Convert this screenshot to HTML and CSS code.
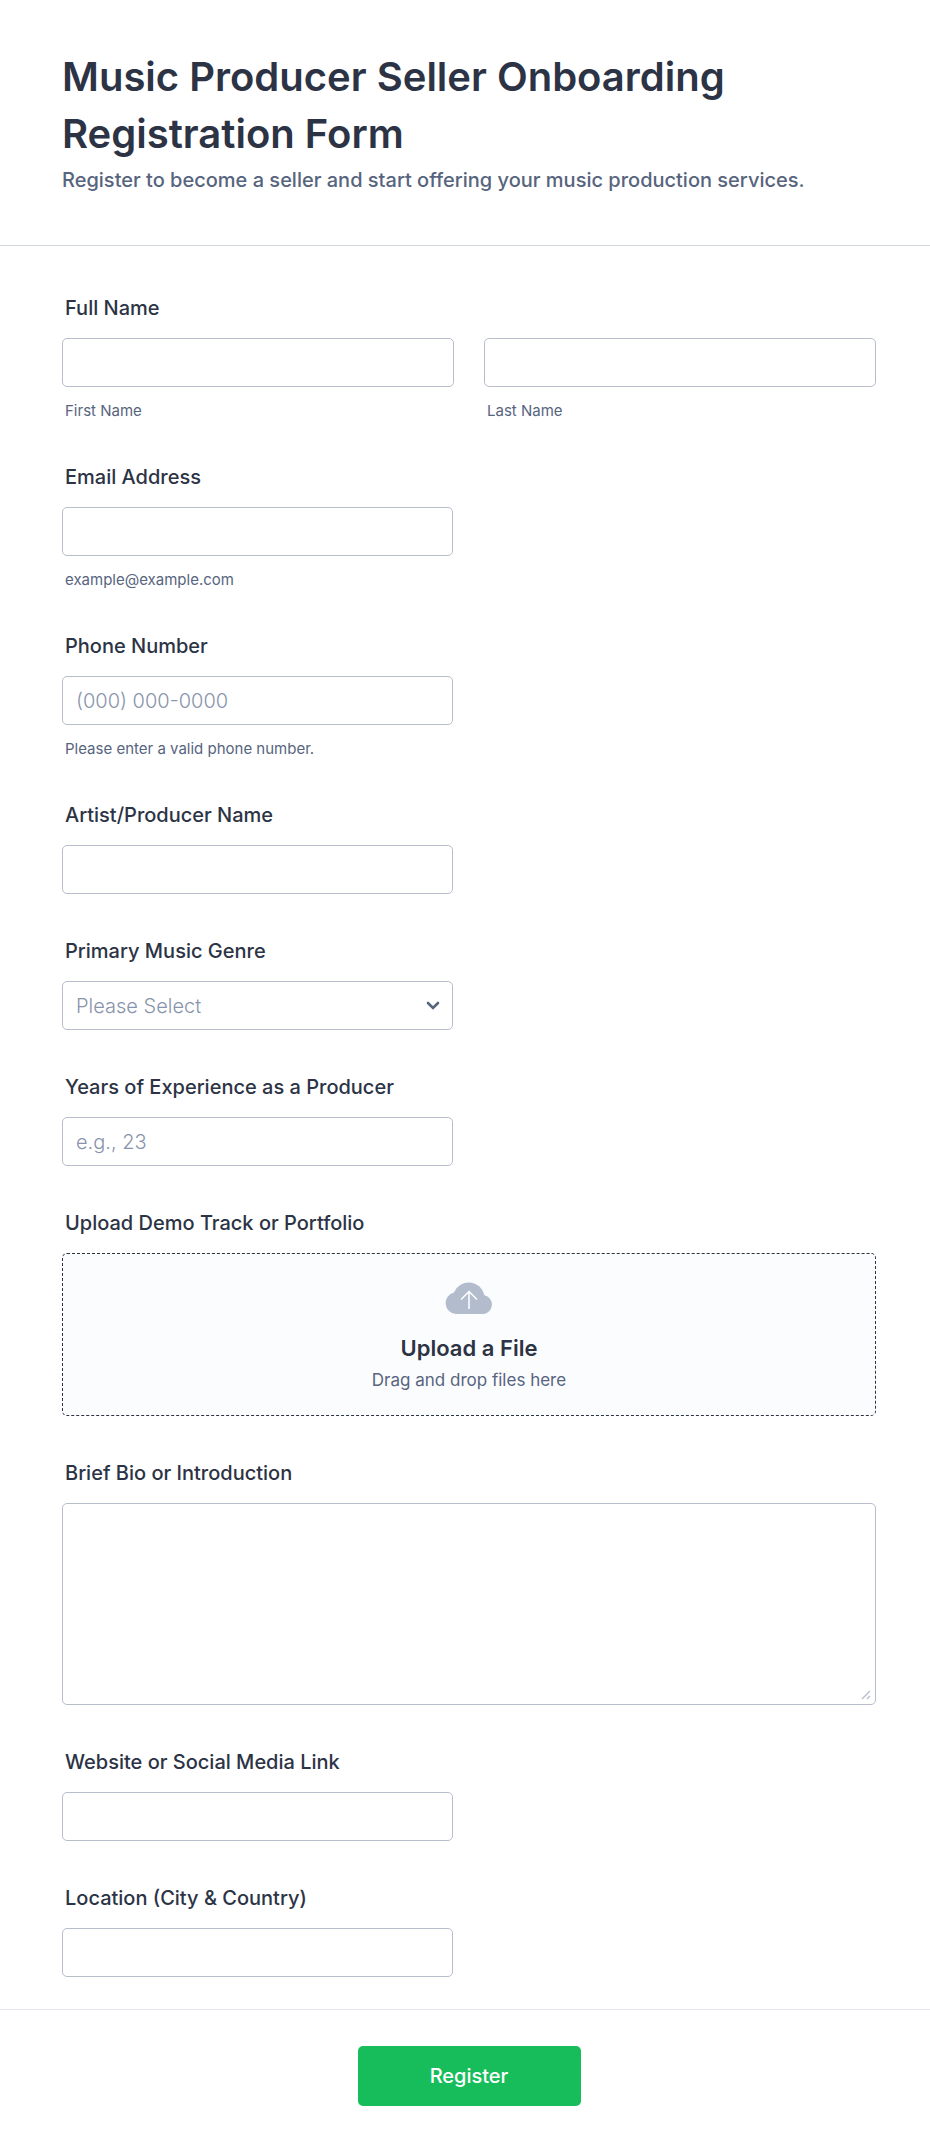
FILE: index.html
```html
<!DOCTYPE html>
<html lang="en">
<head>
    <meta charset="UTF-8">
    <meta name="viewport" content="width=device-width, initial-scale=1.0">
    <title>Music Producer Seller Onboarding Registration Form</title>
    <link rel="stylesheet" href="styles.css">
</head>
<body>
    <form class="form">
        <header class="form-header">
            <h1 class="form-title">Music Producer Seller Onboarding Registration Form</h1>
            <p class="form-subtitle">Register to become a seller and start offering your music production services.</p>
        </header>

        <div class="form-fields">
            <div class="field" role="group" aria-labelledby="fullName">
                <div class="label" id="fullName">Full Name</div>
                <div class="row">
                    <div class="col">
                        <input class="input" type="text" id="firstName">
                        <label class="hint" for="firstName">First Name</label>
                    </div>
                    <div class="col">
                        <input class="input" type="text" id="lastName">
                        <label class="hint" for="lastName">Last Name</label>
                    </div>
                </div>
            </div>

            <div class="field field-half">
                <label class="label" for="email">Email Address</label>
                <input class="input" type="email" id="email" aria-describedby="emailHint">
                <div class="hint" id="emailHint">example@example.com</div>
            </div>

            <div class="field field-half">
                <label class="label" for="phone">Phone Number</label>
                <input class="input" type="tel" id="phone" placeholder="(000) 000-0000" aria-describedby="phoneHint">
                <div class="hint" id="phoneHint">Please enter a valid phone number.</div>
            </div>

            <div class="field field-half">
                <label class="label" for="artist">Artist/Producer Name</label>
                <input class="input" type="text" id="artist">
            </div>

            <div class="field field-half">
                <label class="label" for="genre">Primary Music Genre</label>
                <div class="control">
                    <select class="input select" id="genre">
                        <option value="">Please Select</option>
                        <option>Hip Hop</option>
                        <option>Pop</option>
                        <option>Electronic</option>
                        <option>Rock</option>
                    </select>
                    <svg class="select-arrow" width="14" height="10" viewBox="0 0 14 10" aria-hidden="true">
                        <path d="M2 2l5 5 5-5" fill="none" stroke="#57647e" stroke-width="2.6" stroke-linecap="round"/>
                    </svg>
                </div>
            </div>

            <div class="field field-half">
                <label class="label" for="years">Years of Experience as a Producer</label>
                <input class="input" type="text" inputmode="numeric" id="years" placeholder="e.g., 23">
            </div>

            <div class="field">
                <label class="label" for="demo">Upload Demo Track or Portfolio</label>
                <label class="upload">
                    <input class="upload-input" type="file" id="demo">
                    <svg class="upload-icon" width="48" height="33" viewBox="0 0 48 33" aria-hidden="true">
                        <path d="M11 33A10.900 10.900 0 0 1 9 11.500A16 16 0 0 1 39.500 14.200A9.600 9.600 0 0 1 39 33Z" fill="#b3bccc"/>
                        <path d="M24 28V10M16 18.500l8-8 8 8" fill="none" stroke="#fff" stroke-width="1.500"/>
                    </svg>
                    <span class="upload-title">Upload a File</span>
                    <span class="upload-text">Drag and drop files here</span>
                </label>
            </div>

            <div class="field">
                <label class="label" for="bio">Brief Bio or Introduction</label>
                <div class="control">
                    <textarea class="input textarea" id="bio"></textarea>
                    <svg class="grip" width="10" height="10" viewBox="0 0 10 10" aria-hidden="true">
                        <path d="M1 9l8-8M6 9l3-3" fill="none" stroke="#b8bdcc" stroke-width="1.400"/>
                    </svg>
                </div>
            </div>

            <div class="field field-half">
                <label class="label" for="website">Website or Social Media Link</label>
                <input class="input" type="url" id="website">
            </div>

            <div class="field field-half">
                <label class="label" for="location">Location (City &amp; Country)</label>
                <input class="input" type="text" id="location">
            </div>
        </div>

        <div class="form-footer">
            <button class="button" type="submit">Register</button>
        </div>
    </form>
</body>
</html>
```
FILE: styles.css
```css
* {
    box-sizing: border-box;
}

body {
    margin: 0;
    background-color: #fff;
    color: #2c3345;
    font-family: Inter, "Liberation Sans", sans-serif;
    font-size: 20px;
    line-height: 24px;
}

/* Header */
.form-header {
    padding: 48px 54px 53px 62px;
    border-bottom: 1px solid #d3d7e0;
}

.form-title {
    margin: 0 0 6px;
    font-size: 40px;
    line-height: 57px;
    font-weight: 600;
}

.form-subtitle {
    margin: 0;
    color: #57647e;
    font-weight: 500;
}

/* Fields */
.form-fields {
    display: flex;
    flex-direction: column;
    gap: 45px;
    padding: 50px 54px 32px 62px;
}

.row {
    display: flex;
    gap: 30px;
}

.col {
    flex: 1;
}

.field-half {
    width: 48%;
}

.label {
    display: block;
    margin-bottom: 18px;
    padding-left: 3px;
    font-weight: 500;
}

.hint {
    display: block;
    margin-top: 15px;
    padding-left: 3px;
    color: #57647e;
    font-size: 15px;
    line-height: 18px;
}

.input {
    display: block;
    width: 100%;
    height: 49px;
    padding: 0 13px;
    border: 1px solid #b8bdcc;
    border-radius: 5px;
    background-color: #fff;
    color: #2c3345;
    font-family: inherit;
    font-size: 20px;
    font-weight: 300;
}

.input::placeholder {
    color: #8894ab;
    opacity: 1;
}

.control {
    position: relative;
}

.select {
    appearance: none;
    color: #8894ab;
}

.select-arrow {
    position: absolute;
    top: 20px;
    right: 13px;
    pointer-events: none;
}

.textarea {
    height: 202px;
    padding: 12px 13px;
    resize: none;
}

.grip {
    position: absolute;
    right: 5px;
    bottom: 5px;
    pointer-events: none;
}

/* Upload area */
.upload {
    display: flex;
    flex-direction: column;
    align-items: center;
    height: 163px;
    padding-top: 27px;
    border: 1px dashed #2c3345;
    border-radius: 5px;
    background-color: #fbfcfe;
    cursor: pointer;
}

.upload-input {
    position: absolute;
    width: 1px;
    height: 1px;
    opacity: 0;
}

.upload-title {
    margin-top: 20px;
    font-size: 22px;
    line-height: 28px;
    font-weight: 600;
}

.upload-text {
    margin-top: 6px;
    color: #57647e;
    font-size: 17px;
}

/* Footer */
.form-footer {
    display: flex;
    justify-content: center;
    padding: 36px 54px 49px 62px;
    border-top: 1px solid #e6e8f0;
}

.button {
    min-width: 223px;
    height: 60px;
    border: none;
    border-radius: 5px;
    background-color: #18bd5b;
    color: #fff;
    font-family: inherit;
    font-size: 20px;
    font-weight: 500;
    cursor: pointer;
}
```
